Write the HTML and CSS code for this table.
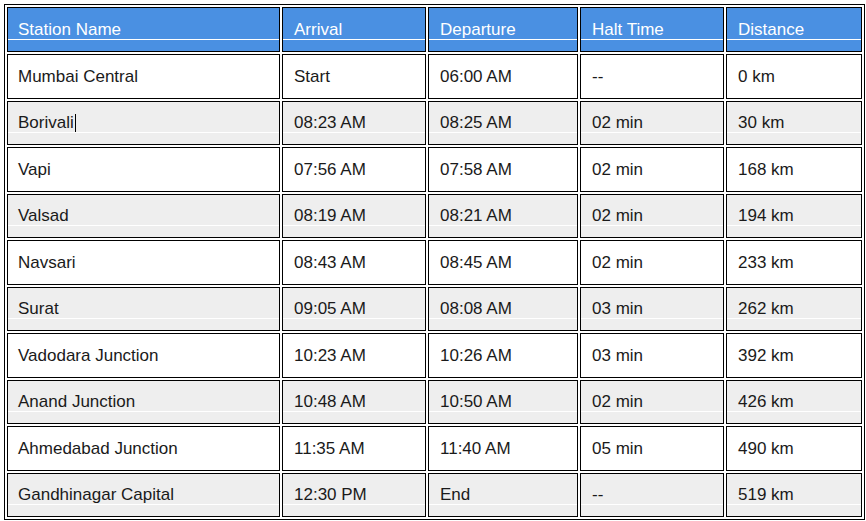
FILE: index.html
```html
<!DOCTYPE html>
<html>
<head>
<meta charset="utf-8">
<link rel="stylesheet" href="styles.css">
</head>
<body>
<table class="schedule">
  <colgroup>
    <col class="c1"><col class="c2"><col class="c3"><col class="c4"><col class="c5">
  </colgroup>
  <thead>
    <tr><th>Station Name</th><th>Arrival</th><th>Departure</th><th>Halt Time</th><th>Distance</th></tr>
  </thead>
  <tbody>
    <tr><td>Mumbai Central</td><td>Start</td><td>06:00 AM</td><td>--</td><td>0 km</td></tr>
    <tr class="alt"><td>Borivali<span class="caret"></span></td><td>08:23 AM</td><td>08:25 AM</td><td>02 min</td><td>30 km</td></tr>
    <tr><td>Vapi</td><td>07:56 AM</td><td>07:58 AM</td><td>02 min</td><td>168 km</td></tr>
    <tr class="alt"><td>Valsad</td><td>08:19 AM</td><td>08:21 AM</td><td>02 min</td><td>194 km</td></tr>
    <tr><td>Navsari</td><td>08:43 AM</td><td>08:45 AM</td><td>02 min</td><td>233 km</td></tr>
    <tr class="alt"><td>Surat</td><td>09:05 AM</td><td>08:08 AM</td><td>03 min</td><td>262 km</td></tr>
    <tr><td>Vadodara Junction</td><td>10:23 AM</td><td>10:26 AM</td><td>03 min</td><td>392 km</td></tr>
    <tr class="alt"><td>Anand Junction</td><td>10:48 AM</td><td>10:50 AM</td><td>02 min</td><td>426 km</td></tr>
    <tr><td>Ahmedabad Junction</td><td>11:35 AM</td><td>11:40 AM</td><td>05 min</td><td>490 km</td></tr>
    <tr class="alt"><td>Gandhinagar Capital</td><td>12:30 PM</td><td>End</td><td>--</td><td>519 km</td></tr>
  </tbody>
</table>
</body>
</html>
```
FILE: styles.css
```css
html, body {
  margin: 0;
  padding: 0;
  background: #fff;
}
body {
  padding: 4px 0 0 4px;
  font-family: "Liberation Sans", Arial, sans-serif;
  font-size: 17px;
  line-height: 20px;
  color: #1a1a1a;
}
.schedule {
  border: 1px solid #000;
  border-spacing: 2px;
  border-collapse: separate;
  table-layout: fixed;
  width: 861px;
}
.c1 { width: 273px; }
.c2 { width: 144px; }
.c3 { width: 150px; }
.c4 { width: 144px; }
.c5 { width: 136px; }
.schedule th,
.schedule td {
  border: 1px solid #000;
  padding: 1px 0 0 11px;
  text-align: left;
  vertical-align: middle;
  white-space: nowrap;
  box-sizing: border-box;
}
.schedule td:first-child,
.schedule th:first-child {
  padding-left: 10px;
}
.schedule th {
  height: 45px;
  font-weight: normal;
  color: #fff;
  background: linear-gradient(to top, transparent 11px, #fff 11px, #fff 12px, transparent 12px), #4a90e2;
}
.schedule td {
  height: 44.5px;
  background: #fff;
}
.schedule tr.alt td {
  background: linear-gradient(to top, transparent 11px, #fff 11px, #fff 12px, transparent 12px), #eeeeee;
}
.caret {
  display: inline-block;
  width: 1px;
  height: 18px;
  background: #000;
  margin-left: 1px;
  vertical-align: -4px;
}
```
